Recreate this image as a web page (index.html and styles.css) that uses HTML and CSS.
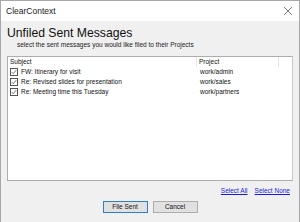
FILE: index.html
```html
<!DOCTYPE html>
<html>
<head>
<meta charset="utf-8">
<link rel="stylesheet" href="styles.css">
</head>
<body>
<div class="window">
  <div class="titlebar">
    <span class="title">ClearContext</span>
    <svg class="close" width="10" height="10" viewBox="0 0 10 10"><path d="M1 1L9 9M9 1L1 9" stroke="#777" stroke-width="1"/></svg>
  </div>
  <div class="content">
    <div class="heading">Unfiled Sent Messages</div>
    <div class="sub">select the sent messages you would like filed to their Projects</div>
    <div class="list">
      <div class="hdr">
        <div class="c1">Subject</div>
        <div class="c2">Project</div>
        <div class="c3"></div>
      </div>
      <div class="row"><div class="c1"><span class="cb"><svg width="8" height="8" viewBox="0 0 8 8"><path d="M1 4.2L3 6.2L7 1.5" fill="none" stroke="#333" stroke-width="0.9"/></svg></span>FW: Itinerary for visit</div><div class="c2">work/admin</div></div>
      <div class="row"><div class="c1"><span class="cb"><svg width="8" height="8" viewBox="0 0 8 8"><path d="M1 4.2L3 6.2L7 1.5" fill="none" stroke="#333" stroke-width="0.9"/></svg></span>Re: Revised slides for presentation</div><div class="c2">work/sales</div></div>
      <div class="row"><div class="c1"><span class="cb"><svg width="8" height="8" viewBox="0 0 8 8"><path d="M1 4.2L3 6.2L7 1.5" fill="none" stroke="#333" stroke-width="0.9"/></svg></span>Re: Meeting time this Tuesday</div><div class="c2">work/partners</div></div>
    </div>
    <div class="links"><a class="lnk">Select All</a><a class="lnk">Select None</a></div>
    <div class="buttons"><button class="btn def">File Sent</button><button class="btn">Cancel</button></div>
  </div>
</div>
</body>
</html>
```
FILE: styles.css
```css
* { box-sizing: border-box; }
html, body { margin: 0; padding: 0; }
body { width: 300px; height: 222px; overflow: hidden; background: #f0f0f0; font-family: "Liberation Sans", sans-serif; }
.window { width: 300px; height: 222px; border: 1px solid #a8a8a8; border-bottom: none; background: #f0f0f0; display: flex; flex-direction: column; }
.titlebar { height: 20px; background: #fff; display: flex; align-items: center; justify-content: space-between; padding: 0 6px 0 5px; flex: none; }
.title { font-size: 8.5px; color: #222; }
.close { display: block; }
.content { flex: 1; display: flex; flex-direction: column; padding: 0 6px 0 6px; }
.heading { font-size: 12.2px; color: #111; margin-top: 5px; line-height: 14px; }
.sub { font-size: 6.5px; color: #222; padding-left: 10px; margin-top: 1px; line-height: 8px; }
.list { margin-top: 7px; height: 125px; width: 286px; background: #fff; border: 1px solid #adadad; border-right-color: #c8c8c8; font-size: 6.5px; color: #111; }
.hdr { display: flex; height: 10px; line-height: 10px; }
.hdr .c1 { width: 189px; padding-left: 2px; border-right: 1px solid #e5e5e5; }
.hdr .c2 { width: 82px; padding-left: 2px; border-right: 1px solid #e5e5e5; }
.row { display: flex; height: 10px; line-height: 10px; }
.row .c1 { width: 189px; padding-left: 2px; display: flex; align-items: center; gap: 3px; }
.row .c2 { padding-left: 3px; }
.cb { width: 8px; height: 8px; border: 1px solid #555; display: flex; align-items: center; justify-content: center; background: #fff; flex: none; }
.cb svg { display: block; width: 6px; height: 6px; }
.links { display: flex; justify-content: flex-end; gap: 7px; padding-right: 3px; margin-top: 5px; font-size: 6.5px; line-height: 9px; }
.lnk { color: #1a1ae6; text-decoration: underline; }
.buttons { display: flex; justify-content: center; gap: 5px; margin-top: 6px; }
.btn { width: 45px; height: 12px; padding: 0; background: #e1e1e1; border: 1px solid #adadad; font-family: "Liberation Sans", sans-serif; font-size: 6.5px; color: #111; line-height: 10px; }
.btn.def { border-color: #2d7ed6; }
```
